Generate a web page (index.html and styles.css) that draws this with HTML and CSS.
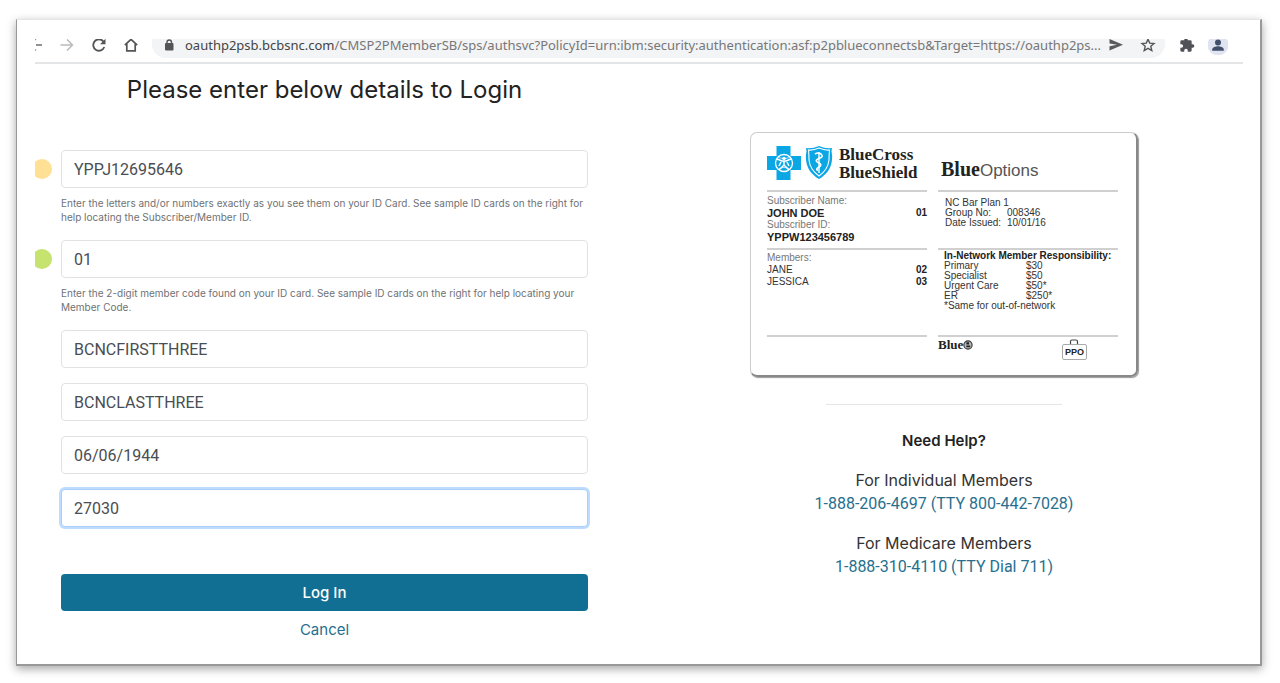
FILE: index.html
```html
<!DOCTYPE html>
<html lang="en">
<head>
<meta charset="utf-8">
<meta name="viewport" content="width=device-width, initial-scale=1">
<title>Log In</title>
<link rel="stylesheet" href="styles.css">
</head>
<body>
<div class="frame">
<div class="viewport">
  <header class="toolbar">
    <nav class="nav-buttons" aria-label="Browser">
      <button class="icon-button" type="button" aria-label="Back"><svg width="8" height="16" viewBox="0 0 8 16"><path d="M1 8h6" stroke="#777" stroke-width="1.6"/><path d="M0 2.500h1.200M0 13h1.200" stroke="#999" stroke-width="1.500"/></svg></button>
      <button class="icon-button" type="button" aria-label="Forward"><svg width="16" height="16" viewBox="0 0 16 16" fill="none" stroke="#bbb" stroke-width="1.500"><path d="M1.500 8h12M8 2.500 13.500 8 8 13.500"/></svg></button>
      <button class="icon-button" type="button" aria-label="Reload"><svg width="16" height="16" viewBox="0 0 16 16"><path d="M13.300 10A5.700 5.700 0 1 1 12.300 4.300" fill="none" stroke="#555" stroke-width="1.800"/><path d="M14.500 1.800v5.400H9z" fill="#555"/></svg></button>
      <button class="icon-button" type="button" aria-label="Home"><svg width="16" height="16" viewBox="0 0 16 16" fill="none" stroke="#555" stroke-width="1.700"><path d="M1.800 8.200 8 2.300l6.200 5.900M3.800 7v6.800h8.400V7"/></svg></button>
    </nav>
    <div class="address">
      <svg class="lock" width="10" height="14" viewBox="0 0 10 14"><rect x="1" y="5" width="8.500" height="7.500" rx="1" fill="#555"/><path d="M3 6V4.200a2.250 2.250 0 0 1 4.500 0V6" fill="none" stroke="#555" stroke-width="1.400"/></svg>
      <span class="url"><span class="host">oauthp2psb.bcbsnc.com</span>/CMSP2PMemberSB/sps/authsvc?PolicyId=urn:ibm:security:authentication:asf:p2pblueconnectsb&amp;Target=https://oauthp2ps...</span>
      <button class="icon-button" type="button" aria-label="Send"><svg width="16" height="16" viewBox="0 0 16 16"><path d="M1.500 2 15 7.800 1.500 13.500V9.200L9 7.800 1.500 6.400z" fill="#5a5a5a"/></svg></button>
      <button class="icon-button star" type="button" aria-label="Bookmark"><svg width="16" height="16" viewBox="0 0 16 16" fill="none" stroke="#555" stroke-width="1.400"><path d="m8 2.200 1.700 3.900 4.300.4-3.200 2.800 1 4.200L8 11.300l-3.800 2.200 1-4.200L2 6.500l4.300-.4z"/></svg></button>
    </div>
    <button class="icon-button" type="button" aria-label="Extensions"><svg width="16" height="16" viewBox="0 0 24 24" fill="#505257"><path d="M20.500 11H19V7a2 2 0 0 0-2-2h-4V3.500a2.500 2.500 0 0 0-5 0V5H4a2 2 0 0 0-2 2v3.800h1.500a2.700 2.700 0 0 1 0 5.400H2V20a2 2 0 0 0 2 2h3.800v-1.500a2.700 2.700 0 0 1 5.400 0V22H17a2 2 0 0 0 2-2v-4h1.500a2.500 2.500 0 0 0 0-5z"/></svg></button>
    <button class="icon-button profile" type="button" aria-label="Profile"><svg width="20" height="17" viewBox="0 0 20 17"><path d="M1.500 0h17A10 10 0 0 1 10 16 10 10 0 0 1 1.500 0z" fill="#dfe4f0"/><circle cx="10" cy="3.500" r="3" fill="#43506b"/><path d="M4.200 11.800v-1.200c0-2.200 3.500-3.300 5.800-3.300s5.800 1.100 5.800 3.300v1.200z" fill="#43506b"/></svg></button>
  </header>

  <main class="page">
    <form class="login">
      <h1 class="title">Please enter below details to Login</h1>
      <div class="field">
        <span class="dot dot-yellow"></span>
        <input class="box" type="text" aria-label="Subscriber or Member ID" aria-describedby="id-help" value="YPPJ12695646">
        <p class="help" id="id-help">Enter the letters and/or numbers exactly as you see them on your ID Card. See sample ID cards on the right for help locating the Subscriber/Member ID.</p>
      </div>
      <div class="field">
        <span class="dot dot-green"></span>
        <input class="box" type="text" aria-label="Member Code" aria-describedby="code-help" value="01">
        <p class="help" id="code-help">Enter the 2-digit member code found on your ID card. See sample ID cards on the right for help locating your Member Code.</p>
      </div>
      <div class="field"><input class="box" type="text" aria-label="First name" value="BCNCFIRSTTHREE"></div>
      <div class="field"><input class="box" type="text" aria-label="Last name" value="BCNCLASTTHREE"></div>
      <div class="field"><input class="box" type="text" aria-label="Date of birth" value="06/06/1944"></div>
      <div class="field"><input class="box box-active" type="text" aria-label="ZIP code" value="27030"></div>
      <button class="submit" type="submit">Log In</button>
      <a class="cancel" href="#">Cancel</a>
    </form>

    <aside class="side">
      <section class="card" aria-label="Sample ID card">
        <div class="brand">
          <svg width="66" height="36" viewBox="0 0 66 36">
            <path d="M9.500 1h14v10H34v14H23.500v10h-14V25H0V11h9.500z" fill="#0ba6e4"/>
            <g fill="none" stroke="#fff"><circle cx="17" cy="18" r="8.500" stroke-width="1.300"/><path d="M17 16v4l-5 5M17 20l5 5M10 14l5 2h4l5-2M14 17l-2 4M20 17l2 4" stroke-width="1.500"/><path d="M11 12c4 2 8 2 12 0M12 24c3-2 7-2 10 0" stroke-width=".7"/></g><circle cx="17" cy="13.500" r="1.800" fill="#fff"/>
            <path d="M39 3q6 1 13-2 7 3 13 2l-.5 3q1 5 .5 9c-1 9-6 15-13 19-7-4-12-10-13-19q-.5-4 .5-9z" fill="#0ba6e4"/>
            <path d="M41.500 5q5 .5 10.500-2 5.500 2.500 10.500 2-.5 5-.5 10c-.8 7-5 12.500-10 16-5-3.500-9.200-9-10-16q0-5-.5-10z" fill="none" stroke="#fff" stroke-width="1.100"/>
            <path d="M52 7v21" stroke="#fff" stroke-width="1.400"/><path d="M48 9q3-2 6 0 3 3-2 4.500-5 2-1 4 5 2 1 4.500-4 2-1 3.500" fill="none" stroke="#fff" stroke-width="1.700"/>
          </svg>
          <span class="brand-name">BlueCross<br>BlueShield</span>
        </div>
        <div class="plan-name"><b>Blue</b><span>Options</span></div>

        <div class="cell subscriber">
          <span class="muted">Subscriber Name:</span>
          <span class="row"><b>JOHN DOE</b><b class="code">01</b></span>
          <span class="muted">Subscriber ID:</span>
          <b>YPPW123456789</b>
        </div>
        <div class="cell plan">
          <span>NC Bar Plan 1</span>
          <dl class="pairs pairs-plan"><dt>Group No:</dt><dd>008346</dd><dt>Date Issued:</dt><dd>10/01/16</dd></dl>
        </div>
        <div class="cell members">
          <span class="muted">Members:</span>
          <span class="row">JANE<b class="code">02</b></span>
          <span class="row">JESSICA<b class="code">03</b></span>
        </div>
        <div class="cell costs">
          <b>In-Network Member Responsibility:</b>
          <dl class="pairs pairs-costs"><dt>Primary</dt><dd>$30</dd><dt>Specialist</dt><dd>$50</dd><dt>Urgent Care</dt><dd>$50*</dd><dt>ER</dt><dd>$250*</dd></dl>
          <span>*Same for out-of-network</span>
        </div>
        <div class="cell"></div>
        <div class="cell marks">
          <span class="blue-mark">Blue<svg width="10" height="10" viewBox="0 0 9 9"><circle cx="4.500" cy="4.500" r="3.700" fill="#bbb" stroke="#333" stroke-width="1"/><path d="M3 2h2.500v2H3zM3 5h3.500v1.500H3z" fill="#222"/></svg></span>
          <span class="ppo"><svg width="10" height="5" viewBox="0 0 10 5"><path d="M1.500 5V2.500Q1.500 1 3 1h4q1.500 0 1.500 1.500V5" fill="none" stroke="#444" stroke-width="1.200"/></svg><b>PPO</b></span>
        </div>
      </section>
      <hr class="rule">
      <section class="support">
        <h2 class="support-title">Need Help?</h2>
        <p class="contact">For Individual Members <a class="phone" href="tel:18882064697">1-888-206-4697 (TTY 800-442-7028)</a></p>
        <p class="contact">For Medicare Members <a class="phone" href="tel:18883104110">1-888-310-4110 (TTY Dial 711)</a></p>
      </section>
    </aside>
  </main>
</div>
</div>
</body>
</html>
```
FILE: styles.css
```css
* { box-sizing: border-box; }
body {
  margin: 0;
  padding: 19px 18px 19px 16px;
  background: #fff;
  color: #333;
  font-family: Inter, "Liberation Sans", sans-serif;
}
.frame {
  padding: 19px 17px 22px 18px;
  background: #fff;
  border: 1px solid #999;
  border-top-color: #e4e4e4;
  border-right: 2px solid #999;
  border-bottom: 2px solid #999;
  box-shadow: 0 3px 9px rgba(0, 0, 0, .35);
}
.viewport { overflow: hidden; }
button { font: inherit; cursor: pointer; }
a { color: #276f8e; text-decoration: none; }

/* Browser toolbar */
.toolbar {
  display: flex;
  align-items: flex-start;
  height: 25px;
  padding-right: 15px;
  border-bottom: 2px solid #e4e5e6;
}
.icon-button {
  display: flex;
  flex: none;
  padding: 0;
  border: 0;
  background: none;
}
.icon-button svg { display: block; }
.nav-buttons {
  display: flex;
  gap: 16px;
  width: 117px;
  flex: none;
  margin-top: -2px;
}
.toolbar > .icon-button { margin-top: -2px; }
.toolbar > .profile { margin: 0 0 0 13px; }
.address {
  display: flex;
  align-items: center;
  flex: 1;
  min-width: 0;
  height: 19px;
  margin-right: 14px;
  padding: 0 9px 7px 12px;
  background: #f3f4f6;
  border-radius: 0 0 14px 14px;
}
.lock { flex: none; margin-right: 11px; }
.star { margin-left: 16px; }
.url {
  flex: 1;
  min-width: 0;
  overflow: hidden;
  color: #777;
  font: 13px/20px "Noto Sans", sans-serif;
  white-space: nowrap;
}
.host { color: #444; }

/* Two-column page */
.page {
  display: grid;
  grid-template-columns: minmax(0, 527fr) minmax(0, 388fr);
  column-gap: 162px;
  padding: 0 105px 0 26px;
}
.login { display: flex; flex-direction: column; }
.title {
  margin: 10px 0 44px;
  color: #222;
  font-size: 24px;
  font-weight: 400;
  line-height: 32px;
  text-align: center;
}
.field { position: relative; margin-bottom: 15px; }
.dot {
  position: absolute;
  top: 9px;
  left: -29px;
  width: 20px;
  height: 20px;
  border-radius: 50%;
}
.dot-yellow { background: #ffe094; }
.dot-green { background: #c7e36f; }
.box {
  display: block;
  width: 100%;
  height: 38px;
  padding: 0 12px;
  border: 1px solid #e1e2e4;
  border-radius: 4px;
  background: #fff;
  color: #4a4d52;
  font: 16px/24px Roboto, sans-serif;
}
.box-active {
  border-color: #a9d0fa;
  outline: none;
  box-shadow: 0 0 0 2px #bddcff;
}
.help {
  margin: 8px 0 0;
  padding-bottom: 1px;
  color: #6f7275;
  font-size: 10px;
  line-height: 14px;
}
.submit {
  height: 37px;
  margin-top: 32px;
  border: 0;
  border-radius: 4px;
  background: #126f94;
  color: #fff;
  font-size: 15px;
  font-weight: 500;
}
.cancel {
  align-self: center;
  margin-top: 7px;
  font-size: 15px;
  line-height: 24px;
}

/* Sample ID card */
.side { padding-top: 68px; }
.card {
  display: grid;
  grid-template-columns: minmax(0, 160fr) minmax(0, 180fr);
  grid-template-rows: 57px 58px 87px 40px;
  column-gap: 11px;
  padding: 0 18px 0 16px;
  border: 1px solid #ccc;
  border-right: 2px solid #888;
  border-bottom: 2px solid #888;
  border-radius: 7px;
  box-shadow: 1px 1px 1px #999;
  color: #333;
  font: 10px/10px "Liberation Sans", Arial, sans-serif;
}
.card b { color: #222; }
.brand { display: flex; gap: 6px; padding-top: 12px; }
.brand svg { flex: none; }
.brand-name {
  padding-top: 1px;
  color: #222;
  font: bold 17px/18px "Liberation Serif", serif;
}
.plan-name {
  align-self: end;
  padding: 0 3px 9px;
  font-size: 17px;
  line-height: 20px;
  color: #555;
}
.plan-name b { font: bold 20px/20px "Liberation Serif", serif; }
.cell {
  display: flex;
  flex-direction: column;
  border-top: 2px solid #d0d0d0;
}
.row { display: flex; justify-content: space-between; }
.muted { color: #777; }
.subscriber { padding-top: 3px; line-height: 12px; }
.subscriber b { font-size: 11px; }
.members { padding-top: 2px; line-height: 12px; }
.card .code { font-size: 10px; }
.plan { padding: 6px 0 0 7px; }
.costs { padding: 1px 0 0 6px; white-space: nowrap; }
.pairs { display: grid; margin: 0; }
.pairs dd { margin: 0; }
.pairs-plan { grid-template-columns: 62px 1fr; }
.pairs-costs { grid-template-columns: 82px 1fr; }
.marks {
  flex-direction: row;
  justify-content: space-between;
  align-items: flex-start;
  padding: 2px 31px 0 0;
}
.blue-mark {
  display: flex;
  align-items: center;
  color: #222;
  font: bold 13px/12px "Liberation Serif", serif;
}
.ppo { display: flex; flex-direction: column; align-items: center; }
.ppo b {
  padding: 2px;
  border: 1px solid #aaa;
  border-radius: 2px;
  font-size: 9px;
  line-height: 10px;
}

/* Support */
.rule {
  width: 61%;
  height: 1px;
  margin: 27px auto 24px;
  border: 0;
  background: #e6e6e6;
}
.support { text-align: center; }
.support-title {
  margin: 0 0 15px;
  color: #222;
  font-size: 15px;
  font-weight: 600;
  line-height: 24px;
}
.contact { margin: 0 0 15px; font-size: 16px; line-height: 24px; }
.phone { display: block; font-family: Roboto, sans-serif; }
```
